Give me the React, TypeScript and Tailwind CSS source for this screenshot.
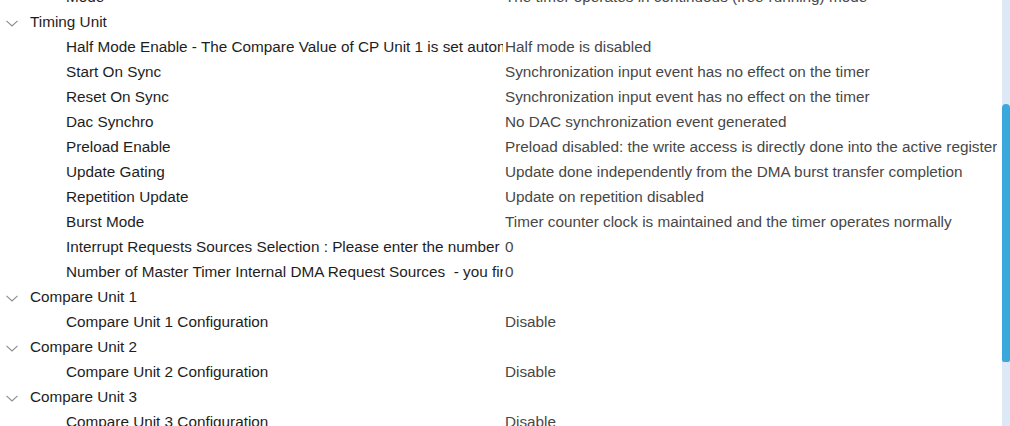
type Row = { label: string; value?: string; group?: boolean }

const rows: Row[] = [
  { label: "Mode", value: "The timer operates in continuous (free-running) mode" },
  { label: "Timing Unit", group: true },
  { label: "Half Mode Enable - The Compare Value of CP Unit 1 is set automatically", value: "Half mode is disabled" },
  { label: "Start On Sync", value: "Synchronization input event has no effect on the timer" },
  { label: "Reset On Sync", value: "Synchronization input event has no effect on the timer" },
  { label: "Dac Synchro", value: "No DAC synchronization event generated" },
  { label: "Preload Enable", value: "Preload disabled: the write access is directly done into the active register" },
  { label: "Update Gating", value: "Update done independently from the DMA burst transfer completion" },
  { label: "Repetition Update", value: "Update on repetition disabled" },
  { label: "Burst Mode", value: "Timer counter clock is maintained and the timer operates normally" },
  { label: "Interrupt Requests Sources Selection : Please enter the number of sources", value: "0" },
  { label: "Number of Master Timer Internal DMA Request Sources  - you first", value: "0" },
  { label: "Compare Unit 1", group: true },
  { label: "Compare Unit 1 Configuration", value: "Disable" },
  { label: "Compare Unit 2", group: true },
  { label: "Compare Unit 2 Configuration", value: "Disable" },
  { label: "Compare Unit 3", group: true },
  { label: "Compare Unit 3 Configuration", value: "Disable" },
]

function Chevron() {
  return (
    <svg width="12" height="7" viewBox="0 0 12 7" className="ml-[6px] mr-[12px] mt-[1px] shrink-0">
      <polyline points="0.5,0.8 6,6 11.5,0.8" fill="none" stroke="#8c8c8c" strokeWidth="1.1" />
    </svg>
  )
}

export default function App() {
  return (
    <div className="flex h-[426px] w-[1010px] overflow-hidden bg-white font-['Liberation_Sans',Arial,sans-serif] text-[15.3px]">
      <div className="flex-1 overflow-hidden">
        <div className="-mt-[15px]">
          {rows.map((r, i) =>
            r.group ? (
              <div key={i} className="flex h-[25px] items-center text-[#1e1e1e]">
                <Chevron />
                <span className="whitespace-pre">{r.label}</span>
              </div>
            ) : (
              <div key={i} className="flex h-[25px] items-center">
                <div className="w-[503px] shrink-0 overflow-hidden whitespace-pre pl-[66px] text-[#1e1e1e]">{r.label}</div>
                <div className="ml-[2px] overflow-hidden whitespace-pre text-[#474747]">{r.value}</div>
              </div>
            )
          )}
        </div>
      </div>
      <div className="flex w-[8px] shrink-0 flex-col bg-[#dde9f6] pt-[104px]">
        <div className="h-[258px] rounded-t-[4px] rounded-b-[2px] bg-[#3aa8dc]" />
      </div>
    </div>
  )
}
